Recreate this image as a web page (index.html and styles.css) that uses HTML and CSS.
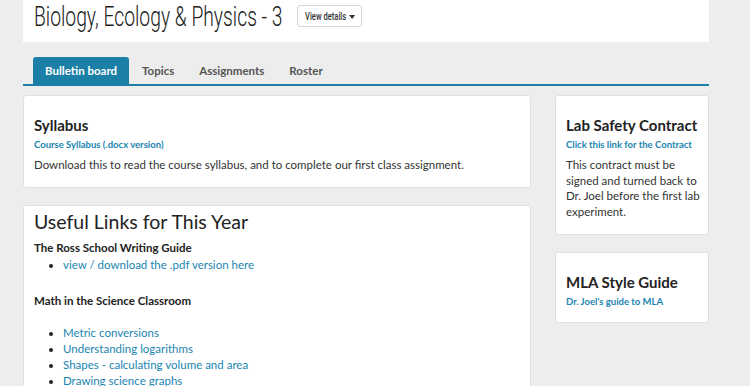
FILE: index.html
```html
<!DOCTYPE html>
<html lang="en">
<head>
  <meta charset="UTF-8" />
  <title>Biology, Ecology &amp; Physics - 3</title>
  <link rel="stylesheet" href="styles.css">
</head>
<body>
  <div class="page">
    <header class="course-header">
      <h1 class="course-title"><span class="narrow">Biology, Ecology &amp; Physics - 3</span></h1>
      <button class="details-btn"><span class="narrow">View details <span class="caret"></span></span></button>
    </header>

    <nav class="tabs">
      <a class="tab active" href="#">Bulletin board</a>
      <a class="tab" href="#">Topics</a>
      <a class="tab" href="#">Assignments</a>
      <a class="tab" href="#">Roster</a>
    </nav>

    <div class="board">
      <div class="main-col">
        <section class="card">
          <h3>Syllabus</h3>
          <a class="card-link" href="#">Course Syllabus (.docx version)</a>
          <p>Download this to read the course syllabus, and to complete our first class assignment.</p>
        </section>

        <section class="card links-card">
          <h2>Useful Links for This Year</h2>
          <p class="group-title">The Ross School Writing Guide</p>
          <ul class="first-list">
            <li><a href="#">view / download the .pdf version here</a></li>
          </ul>
          <p class="group-title spaced">Math in the Science Classroom</p>
          <ul class="math-list">
            <li><a href="#">Metric conversions</a></li>
            <li><a href="#">Understanding logarithms</a></li>
            <li><a href="#">Shapes - calculating volume and area</a></li>
            <li><a href="#">Drawing science graphs</a></li>
          </ul>
        </section>
      </div>

      <aside class="side-col">
        <section class="card">
          <h3>Lab Safety Contract</h3>
          <a class="card-link" href="#">Click this link for the Contract</a>
          <p>This contract must be signed and turned back to Dr. Joel before the first lab experiment.</p>
        </section>
        <section class="card">
          <h3>MLA Style Guide</h3>
          <a class="card-link" href="#">Dr. Joel's guide to MLA</a>
        </section>
      </aside>
    </div>
  </div>
</body>
</html>
```

FILE: styles.css
```css
* {
  box-sizing: border-box;
}

body {
  margin: 0;
  background: #ededed;
  font-family: Lato, "Noto Sans", sans-serif;
  color: #222;
  overflow: hidden;
}

.page {
  margin-left: 23px;
  width: 686px;
}

/* header */
.course-header {
  background: white;
  height: 42px;
  display: flex;
  align-items: flex-start;
  padding: 0 11px;
}

.narrow {
  display: inline-block;
  transform-origin: left center;
  white-space: nowrap;
}

.course-title {
  margin: 0;
  width: 246px;
  font-family: Roboto, sans-serif;
  font-weight: 300;
  font-size: 27px;
  line-height: 34px;
  color: #222;
}

.course-title .narrow {
  transform: scaleX(0.715);
}

.details-btn {
  margin-left: 17px;
  margin-top: 5px;
  width: 65px;
  height: 22px;
  padding: 0 0 0 7px;
  text-align: left;
  background: white;
  border: 1px solid #d4d4d4;
  border-radius: 3px;
  font-family: Roboto, sans-serif;
  font-weight: 500;
  font-size: 10px;
  color: #333;
}

.details-btn .narrow {
  transform: scaleX(0.76);
}

.caret {
  display: inline-block;
  width: 0;
  height: 0;
  border-left: 4px solid transparent;
  border-right: 4px solid transparent;
  border-top: 4px solid #333;
  vertical-align: middle;
  margin-left: 1px;
}

/* tabs */
.tabs {
  margin-top: 15px;
  display: flex;
  padding-left: 10px;
  border-bottom: 2px solid #1b7fa6;
}

.tab {
  display: block;
  height: 27px;
  line-height: 27px;
  padding: 0 12px;
  margin-right: 1px;
  font-size: 11.5px;
  font-weight: 700;
  color: #555;
  text-decoration: none;
  border-radius: 3px 3px 0 0;
}

.tab.active {
  background: #1b7fa6;
  color: white;
}

/* board */
.board {
  margin-top: 9px;
  display: grid;
  grid-template-columns: 508px 154px;
  column-gap: 24px;
  align-items: start;
}

.main-col,
.side-col {
  display: flex;
  flex-direction: column;
  gap: 17px;
}

.card {
  background: white;
  border: 1px solid #e0e0e0;
  border-radius: 3px;
  padding: 18px 10px 12px;
}

.side-col .card {
  padding-right: 4px;
}

.card h3 {
  margin: 0;
  font-size: 15px;
  font-weight: 700;
  line-height: 22px;
  color: #222;
}

.card-link {
  display: block;
  margin-top: 1px;
  font-size: 9.5px;
  font-weight: 700;
  line-height: 16px;
  color: #1a85b0;
  text-decoration: none;
}

.card p {
  margin: 4px 0 2px;
  font-size: 11.5px;
  line-height: 15.7px;
  color: #333;
}

.links-card {
  padding-top: 2px;
  font-size: 11.5px;
  line-height: 15.7px;
  min-height: 300px;
}

.links-card h2 {
  margin: 0 0 4px;
  font-size: 19.5px;
  font-weight: 400;
  line-height: 28px;
  color: #222;
}

.links-card .group-title {
  margin: 0;
  font-size: 11.5px;
  line-height: 16px;
  font-weight: 700;
  color: #222;
}

.links-card .group-title.spaced {
  margin-top: 21px;
}

.links-card ul {
  margin: 1px 0 0;
  padding-left: 29px;
}

.links-card .math-list {
  margin-top: 16px;
}

.links-card a {
  color: #1a85b0;
  text-decoration: none;
}
```
